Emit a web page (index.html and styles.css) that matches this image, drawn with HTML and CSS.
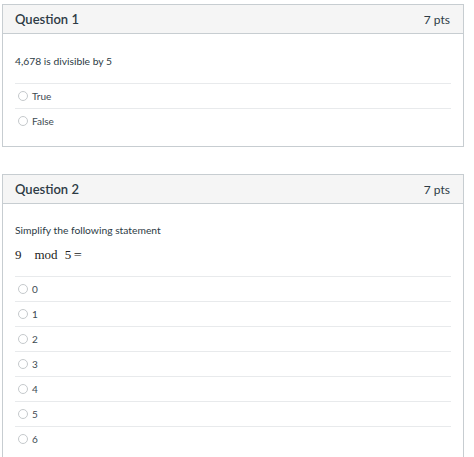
FILE: index.html
```html
<!DOCTYPE html>
<html>
<head>
<meta charset="utf-8">
<link rel="stylesheet" href="styles.css">
</head>
<body>
<div class="page">
  <section class="card">
    <header class="card-head">
      <span class="q-title">Question 1</span>
      <span class="q-pts">7 pts</span>
    </header>
    <div class="card-body">
      <p class="q-text">4,678 is divisible by 5</p>
      <ul class="answers">
        <li class="answer"><span class="radio"></span><span>True</span></li>
        <li class="answer"><span class="radio"></span><span>False</span></li>
      </ul>
    </div>
  </section>

  <section class="card card-2">
    <header class="card-head">
      <span class="q-title">Question 2</span>
      <span class="q-pts">7 pts</span>
    </header>
    <div class="card-body">
      <p class="q-text">Simplify the following statement</p>
      <p class="math"><span>9</span><span class="op">mod</span><span>5</span><span class="eq">=</span></p>
      <ul class="answers">
        <li class="answer"><span class="radio"></span><span>0</span></li>
        <li class="answer"><span class="radio"></span><span>1</span></li>
        <li class="answer"><span class="radio"></span><span>2</span></li>
        <li class="answer"><span class="radio"></span><span>3</span></li>
        <li class="answer"><span class="radio"></span><span>4</span></li>
        <li class="answer"><span class="radio"></span><span>5</span></li>
        <li class="answer"><span class="radio"></span><span>6</span></li>
      </ul>
    </div>
  </section>
</div>
</body>
</html>
```

FILE: styles.css
```css
html, body {
  margin: 0;
  padding: 0;
  background: #ffffff;
}
body {
  font-family: Lato, "Noto Sans", sans-serif;
  color: #2d3b45;
}
.page {
  padding: 4px 10px 0 2px;
  display: flex;
  flex-direction: column;
  gap: 27px;
}
.card {
  border: 1px solid #c7cdd1;
  background: #fff;
  width: 460px;
}
.card-head {
  display: flex;
  justify-content: space-between;
  align-items: center;
  height: 28px;
  padding: 0 13px 0 12px;
  background: #f5f5f5;
  border-bottom: 1px solid #c7cdd1;
}
.q-title {
  font-size: 13px;
  font-weight: 600;
  color: #2d3b45;
}
.q-pts {
  font-size: 12px;
  font-weight: 400;
  color: #2d3b45;
}
.card-body {
  padding: 20px 12px 13px 12px;
}
.q-text {
  margin: 0;
  font-size: 10.3px;
  line-height: 15px;
}
.answers {
  list-style: none;
  margin: 14px 0 0 0;
  padding: 0;
}
.answer {
  display: flex;
  align-items: center;
  gap: 4px;
  height: 24px;
  border-top: 1px solid #e8eaec;
  font-size: 10px;
  color: #3d4a52;
  padding-left: 3px;
}
.radio {
  width: 8px;
  height: 8px;
  border: 1px solid #c5c9cc;
  border-radius: 50%;
  background: #fff;
}
.card-2 .q-text {
  margin-top: -1px;
}
.math {
  margin: 9px 0 0 0;
  font-family: "Liberation Serif", "Times New Roman", serif;
  font-size: 13px;
  line-height: 16px;
  color: #222;
  display: flex;
}
.math .op {
  margin: 0 7px 0 13px;
}
.math .eq {
  margin-left: 3px;
  transform: scaleX(1.1);
}
.card-2 .answers {
  margin-top: 13px;
}
```
